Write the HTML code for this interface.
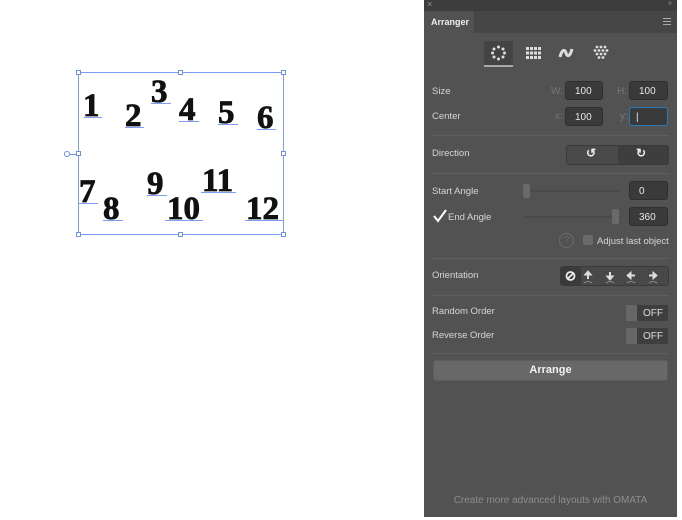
<!DOCTYPE html>
<html><head><style>
*{margin:0;padding:0;box-sizing:border-box}
body{width:682px;height:520px;background:#fff;position:relative;overflow:hidden;font-family:"Liberation Sans",sans-serif}
.a{position:absolute}
.n{position:absolute;font-family:"Liberation Serif",serif;font-weight:bold;font-size:33px;color:#111;line-height:1;-webkit-text-stroke:0.8px #111}
.h{position:absolute;width:5px;height:5px;border:1px solid #6d8ff0;background:#fff}
.ul{position:absolute;height:1px;background:#7c9cf5}
.p{position:absolute;left:424px;top:0;width:253px;height:517px;background:#525252}
.l{position:absolute;color:#d6d6d6;font-size:9.5px}
.sep{position:absolute;left:8px;width:237px;height:1px;background:#3f3f3f;border-bottom:1px solid #5e5e5e}
.in{position:absolute;background:#3a3a3a;border:1px solid #2f2f2f;border-radius:3px;color:#e8e8e8;font-size:10px;padding:4px 0 0 9px;height:19px}
.g{position:absolute;color:#777;font-size:10px}
</style></head><body>
<div class="a" style="left:78px;top:72px;width:206px;height:163px;border:1px solid #7c9cf5"></div>
<div class="h" style="left:76px;top:70px"></div><div class="h" style="left:178px;top:70px"></div><div class="h" style="left:281px;top:70px"></div>
<div class="h" style="left:76px;top:151px"></div><div class="h" style="left:281px;top:151px"></div>
<div class="h" style="left:76px;top:232px"></div><div class="h" style="left:178px;top:232px"></div><div class="h" style="left:281px;top:232px"></div>
<div class="a" style="left:64px;top:151px;width:6px;height:6px;border:1px solid #6d8ff0;border-radius:50%;background:#fff"></div>
<div class="a" style="left:70px;top:154px;width:7px;height:1px;background:#6d8ff0"></div>
<div class="n" style="left:83px;top:90px">1</div><div class="ul" style="left:84px;top:117px;width:18px"></div>
<div class="n" style="left:125px;top:100px">2</div><div class="ul" style="left:125px;top:127px;width:19px"></div>
<div class="n" style="left:151px;top:76px">3</div><div class="ul" style="left:151px;top:103px;width:20px"></div>
<div class="n" style="left:179px;top:94px">4</div><div class="ul" style="left:179px;top:121px;width:20px"></div>
<div class="n" style="left:218px;top:97px">5</div><div class="ul" style="left:218px;top:124px;width:20px"></div>
<div class="n" style="left:257px;top:102px">6</div><div class="ul" style="left:257px;top:129px;width:19px"></div>
<div class="n" style="left:79px;top:176px">7</div><div class="ul" style="left:78px;top:203px;width:20px"></div>
<div class="n" style="left:103px;top:193px">8</div><div class="ul" style="left:103px;top:220px;width:20px"></div>
<div class="n" style="left:147px;top:168px">9</div><div class="ul" style="left:147px;top:195px;width:20px"></div>
<div class="n" style="left:167px;top:193px">10</div><div class="ul" style="left:165px;top:220px;width:38px"></div>
<div class="n" style="left:202px;top:165px">11</div><div class="ul" style="left:201px;top:192px;width:35px"></div>
<div class="n" style="left:246px;top:193px">12</div><div class="ul" style="left:245px;top:220px;width:38px"></div>

<div class="p">
 <div class="a" style="left:0;top:0;width:253px;height:11px;background:#3d3d3d"></div>
 <div class="a" style="left:3px;top:-1px;color:#999;font-size:9px">×</div>
 <div class="a" style="right:5px;top:0px;color:#999;font-size:7px">»</div>
 <div class="a" style="left:0;top:11px;width:253px;height:22px;background:#464646"></div>
 <div class="a" style="left:0;top:11px;width:50px;height:22px;background:#525252"></div>
 <div class="a" style="left:7px;top:17px;color:#eee;font-size:9px;font-weight:bold">Arranger</div>
 <div class="a" style="left:239px;top:18px;width:8px;height:7px;border-top:1px solid #aaa;border-bottom:1px solid #aaa"><div style="margin-top:2px;height:1px;background:#aaa"></div></div>
 <div class="a" style="left:60px;top:41px;width:29px;height:24px;background:#444"></div>
 <div class="a" style="left:60px;top:65px;width:29px;height:2px;background:#aaa"></div>
 <svg class="a" style="left:60px;top:41px" width="190" height="24">
  <g fill="#ddd">
   <circle cx="14.5" cy="6" r="1.5"/><circle cx="19" cy="8" r="1.5"/><circle cx="20.5" cy="12" r="1.5"/><circle cx="19" cy="16" r="1.5"/><circle cx="14.5" cy="18" r="1.5"/><circle cx="10" cy="16" r="1.5"/><circle cx="8.5" cy="12" r="1.5"/><circle cx="10" cy="8" r="1.5"/>
  </g>
  <g fill="#ddd">
   <rect x="42" y="6" width="3" height="3"/><rect x="46" y="6" width="3" height="3"/><rect x="50" y="6" width="3" height="3"/><rect x="54" y="6" width="3" height="3"/>
   <rect x="42" y="10.5" width="3" height="3"/><rect x="46" y="10.5" width="3" height="3"/><rect x="50" y="10.5" width="3" height="3"/><rect x="54" y="10.5" width="3" height="3"/>
   <rect x="42" y="15" width="3" height="3"/><rect x="46" y="15" width="3" height="3"/><rect x="50" y="15" width="3" height="3"/><rect x="54" y="15" width="3" height="3"/>
  </g>
  <path d="M76 16 C78 8 81 8 82 12 C83 16 86 16 88 8" stroke="#ddd" stroke-width="3" fill="none"/>
  <g fill="#ddd">
   <circle cx="113" cy="6" r="1.4"/><circle cx="117" cy="6" r="1.4"/><circle cx="121" cy="6" r="1.4"/>
   <circle cx="115" cy="9.5" r="1.4"/><circle cx="119" cy="9.5" r="1.4"/><circle cx="123" cy="9.5" r="1.4"/><circle cx="111" cy="9.5" r="1.4"/>
   <circle cx="113" cy="13" r="1.4"/><circle cx="117" cy="13" r="1.4"/><circle cx="121" cy="13" r="1.4"/>
   <circle cx="115" cy="16.5" r="1.4"/><circle cx="119" cy="16.5" r="1.4"/>
  </g>
 </svg>
 <div class="l" style="left:8px;top:86px">Size</div>
 <div class="g" style="left:127px;top:86px">W:</div><div class="in" style="left:141px;top:81px;width:38px">100</div>
 <div class="g" style="left:193px;top:86px">H:</div><div class="in" style="left:205px;top:81px;width:39px">100</div>
 <div class="l" style="left:8px;top:111px">Center</div>
 <div class="g" style="left:131px;top:111px">x:</div><div class="in" style="left:141px;top:107px;width:38px">100</div>
 <div class="g" style="left:196px;top:111px">y:</div><div class="in" style="left:205px;top:107px;width:39px;border:1px solid #2a7ab8;padding-left:6px">|</div>
 <div class="sep" style="top:135px"></div>
 <div class="l" style="left:8px;top:148px">Direction</div>
 <div class="a" style="left:142px;top:145px;width:103px;height:20px;background:#4a4a4a;border:1px solid #3a3a3a;border-radius:3px"></div>
 <div class="a" style="left:194px;top:146px;width:50px;height:18px;background:#3e3e3e"></div>
 <div class="a" style="left:162px;top:146px;color:#eee;font-size:12px;font-weight:bold">↺</div>
 <div class="a" style="left:212px;top:146px;color:#eee;font-size:12px;font-weight:bold">↻</div>
 <div class="sep" style="top:173px"></div>
 <div class="l" style="left:8px;top:186px">Start Angle</div>
 <div class="a" style="left:100px;top:190px;width:97px;height:2px;background:#4a4a4a"></div>
 <div class="a" style="left:99px;top:184px;width:7px;height:14px;background:#6a6a6a;border-radius:2px"></div>
 <div class="in" style="left:205px;top:181px;width:39px">0</div>
 <svg class="a" style="left:9px;top:209px" width="14" height="14"><path d="M1 7 L5 12 L13 1" stroke="#fff" stroke-width="2" fill="none"/></svg>
 <div class="l" style="left:24px;top:212px">End Angle</div>
 <div class="a" style="left:100px;top:216px;width:97px;height:2px;background:#4a4a4a"></div>
 <div class="a" style="left:188px;top:209px;width:7px;height:15px;background:#6a6a6a;border-radius:2px"></div>
 <div class="in" style="left:205px;top:207px;width:39px">360</div>
 <div class="a" style="left:135px;top:233px;width:15px;height:15px;border:1px solid #6c6c6c;border-radius:50%;color:#6c6c6c;font-size:10px;text-align:center;line-height:13px">?</div>
 <div class="a" style="left:159px;top:235px;width:10px;height:10px;background:#6a6a6a;border-radius:2px"></div>
 <div class="l" style="left:173px;top:236px;font-size:9.5px">Adjust last object</div>
 <div class="sep" style="top:258px"></div>
 <div class="l" style="left:8px;top:270px">Orientation</div>
 <div class="a" style="left:136px;top:266px;width:109px;height:20px;background:#484848;border:1px solid #3a3a3a;border-radius:3px"></div>
 <div class="a" style="left:137px;top:267px;width:20px;height:18px;background:#3a3a3a"></div>
 <svg class="a" style="left:136px;top:266px" width="109" height="20">
  <circle cx="10.5" cy="10" r="4" stroke="#eee" stroke-width="1.8" fill="none"/><path d="M8 12.5 L13 7.5" stroke="#eee" stroke-width="1.8"/>
  <g fill="#ddd" stroke="#ddd">
   <path d="M28 5 L24.5 9 L31.5 9 Z"/><rect x="27" y="9" width="2" height="4" stroke="none"/>
   <path d="M50 14 L46.5 10 L53.5 10 Z"/><rect x="49" y="6" width="2" height="4" stroke="none"/>
   <path d="M67 9.5 L71 6 L71 13 Z"/><rect x="71" y="8.5" width="4" height="2" stroke="none"/>
   <path d="M97 9.5 L93 6 L93 13 Z"/><rect x="89" y="8.5" width="4" height="2" stroke="none"/>
  </g>
  <g stroke="#999" fill="none" stroke-width="0.8">
   <path d="M24 17 Q28 14 32 17"/><path d="M46 17 Q50 14 54 17"/><path d="M67 17 Q71 14 75 17"/><path d="M89 17 Q93 14 97 17"/>
  </g>
 </svg>
 <div class="sep" style="top:295px"></div>
 <div class="l" style="left:8px;top:306px">Random Order</div>
 <div class="a" style="left:202px;top:305px;width:42px;height:16px;background:#3e3e3e;border-radius:2px"></div>
 <div class="a" style="left:202px;top:305px;width:11px;height:16px;background:#666"></div>
 <div class="a" style="left:219px;top:308px;color:#ddd;font-size:10px">OFF</div>
 <div class="l" style="left:8px;top:330px">Reverse Order</div>
 <div class="a" style="left:202px;top:328px;width:42px;height:16px;background:#3e3e3e;border-radius:2px"></div>
 <div class="a" style="left:202px;top:328px;width:11px;height:16px;background:#666"></div>
 <div class="a" style="left:219px;top:331px;color:#ddd;font-size:10px">OFF</div>
 <div class="sep" style="top:353px"></div>
 <div class="a" style="left:9px;top:360px;width:235px;height:21px;background:#686868;border:1px solid #5c5c5c;border-radius:3px;color:#f2f2f2;font-size:11px;font-weight:bold;text-align:center;line-height:19px">Arrange</div>
 <div class="a" style="left:0;top:495px;width:253px;text-align:center;color:#8e8e8e;font-size:10px">Create more advanced layouts with OMATA</div>
</div>
</body></html>
